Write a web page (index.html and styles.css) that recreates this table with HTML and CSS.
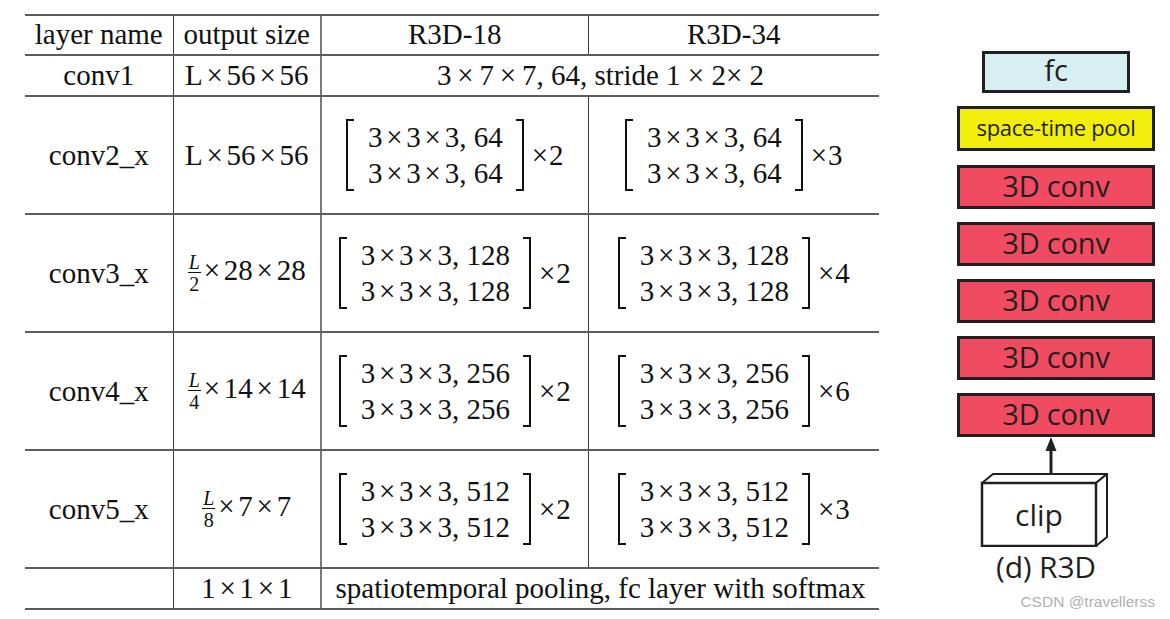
FILE: index.html
```html
<!DOCTYPE html>
<html lang="en">
  <head>
    <meta charset="UTF-8" />
    <title>R3D</title>
    <link rel="stylesheet" href="styles.css">
  </head>
  <body>
    <div class="page">
      <table class="arch">
        <tr class="head">
          <td class="c1">layer name</td>
          <td class="c2">output size</td>
          <td class="c3">R3D-18</td>
          <td class="c4">R3D-34</td>
        </tr>
        <tr class="thin">
          <td>conv1</td>
          <td>L<span class="x">×</span>56<span class="x">×</span>56</td>
          <td class="c3 wide" colspan="2">3<span class="x">×</span>7<span class="x">×</span>7, 64, stride 1 × 2× 2</td>
        </tr>
        <tr class="tall">
          <td>conv2_x</td>
          <td>L<span class="x">×</span>56<span class="x">×</span>56</td>
          <td class="c3">
            <div class="mat"><span class="lb"></span><span class="rows"><span>3<span class="x">×</span>3<span class="x">×</span>3, 64</span><span>3<span class="x">×</span>3<span class="x">×</span>3, 64</span></span><span class="rb"></span><span class="rep"><span class="x">×</span>2</span></div>
          </td>
          <td>
            <div class="mat"><span class="lb"></span><span class="rows"><span>3<span class="x">×</span>3<span class="x">×</span>3, 64</span><span>3<span class="x">×</span>3<span class="x">×</span>3, 64</span></span><span class="rb"></span><span class="rep"><span class="x">×</span>3</span></div>
          </td>
        </tr>
        <tr class="tall">
          <td>conv3_x</td>
          <td><span class="frac"><i>L</i><span>2</span></span><span class="x">×</span>28<span class="x">×</span>28</td>
          <td class="c3">
            <div class="mat"><span class="lb"></span><span class="rows"><span>3<span class="x">×</span>3<span class="x">×</span>3, 128</span><span>3<span class="x">×</span>3<span class="x">×</span>3, 128</span></span><span class="rb"></span><span class="rep"><span class="x">×</span>2</span></div>
          </td>
          <td>
            <div class="mat"><span class="lb"></span><span class="rows"><span>3<span class="x">×</span>3<span class="x">×</span>3, 128</span><span>3<span class="x">×</span>3<span class="x">×</span>3, 128</span></span><span class="rb"></span><span class="rep"><span class="x">×</span>4</span></div>
          </td>
        </tr>
        <tr class="tall">
          <td>conv4_x</td>
          <td><span class="frac"><i>L</i><span>4</span></span><span class="x">×</span>14<span class="x">×</span>14</td>
          <td class="c3">
            <div class="mat"><span class="lb"></span><span class="rows"><span>3<span class="x">×</span>3<span class="x">×</span>3, 256</span><span>3<span class="x">×</span>3<span class="x">×</span>3, 256</span></span><span class="rb"></span><span class="rep"><span class="x">×</span>2</span></div>
          </td>
          <td>
            <div class="mat"><span class="lb"></span><span class="rows"><span>3<span class="x">×</span>3<span class="x">×</span>3, 256</span><span>3<span class="x">×</span>3<span class="x">×</span>3, 256</span></span><span class="rb"></span><span class="rep"><span class="x">×</span>6</span></div>
          </td>
        </tr>
        <tr class="tall">
          <td>conv5_x</td>
          <td><span class="frac"><i>L</i><span>8</span></span><span class="x">×</span>7<span class="x">×</span>7</td>
          <td class="c3">
            <div class="mat"><span class="lb"></span><span class="rows"><span>3<span class="x">×</span>3<span class="x">×</span>3, 512</span><span>3<span class="x">×</span>3<span class="x">×</span>3, 512</span></span><span class="rb"></span><span class="rep"><span class="x">×</span>2</span></div>
          </td>
          <td>
            <div class="mat"><span class="lb"></span><span class="rows"><span>3<span class="x">×</span>3<span class="x">×</span>3, 512</span><span>3<span class="x">×</span>3<span class="x">×</span>3, 512</span></span><span class="rb"></span><span class="rep"><span class="x">×</span>3</span></div>
          </td>
        </tr>
        <tr class="thin">
          <td></td>
          <td>1<span class="x">×</span>1<span class="x">×</span>1</td>
          <td class="c3" colspan="2">spatiotemporal pooling, fc layer with softmax</td>
        </tr>
      </table>

      <div class="diagram">
        <div class="box fc">fc</div>
        <div class="box pool">space-time pool</div>
        <div class="box conv">3D conv</div>
        <div class="box conv">3D conv</div>
        <div class="box conv">3D conv</div>
        <div class="box conv">3D conv</div>
        <div class="box conv last">3D conv</div>
        <svg class="arrow" width="20" height="42" viewBox="0 0 20 42">
          <path d="M10 42 V12" stroke="#231f20" stroke-width="3" fill="none" />
          <path d="M10 0 L4.5 14 L15.5 14 Z" fill="#231f20" />
        </svg>
        <svg class="clip" width="130" height="74" viewBox="0 0 130 74">
          <path d="M2 10 L13 1 H127 L116 10 Z" fill="#fff" stroke="#231f20" stroke-width="2" stroke-linejoin="round" />
          <path d="M116 10 L127 1 V64 L116 73 Z" fill="#fff" stroke="#231f20" stroke-width="2" stroke-linejoin="round" />
          <rect x="2" y="10" width="114" height="63" fill="#fff" stroke="#231f20" stroke-width="2.5" />
          <text x="59" y="53" text-anchor="middle" class="clip-label">clip</text>
        </svg>
        <div class="caption">(d) R3D</div>
      </div>
    </div>
    <div class="mark">CSDN @travellerss</div>
  </body>
</html>
```

FILE: styles.css
```css
* {
  margin: 0;
  padding: 0;
  box-sizing: border-box;
}
body {
  background: #fff;
  width: 1170px;
  height: 619px;
  overflow: hidden;
  position: relative;
}
.page {
  display: flex;
  align-items: flex-start;
  padding: 14px 0 0 25px;
}

/* table */
.arch {
  border-collapse: collapse;
  font-family: "Liberation Serif", "Times New Roman", serif;
  font-size: 29px;
  color: #111;
  width: 854px;
  table-layout: fixed;
}
.arch td {
  border-top: 2px solid #5c5c5c;
  border-bottom: 2px solid #5c5c5c;
  border-left: 1.5px solid #3a3a3a;
  text-align: center;
  vertical-align: middle;
  white-space: nowrap;
  padding: 0;
  line-height: 1;
}
.arch td:first-child {
  border-left: none;
}
.arch td.c3 {
  border-left: 2px solid #7a7a7a;
}
.c1 { width: 148px; }
.c2 { width: 148px; }
.c3 { width: 267px; }
.c4 { width: 291px; }
.head td { height: 40px; padding-bottom: 2px; }
.thin td { height: 41px; padding-bottom: 1px; }
.tall td { height: 118px; }
.x {
  margin: 0 0.13em;
}
.wide .x {
  margin: 0 0.2em;
}

.frac {
  display: inline-flex;
  flex-direction: column;
  align-items: center;
  font-size: 20px;
  vertical-align: middle;
  line-height: 1;
  margin-right: -1px;
}
.frac i {
  border-bottom: 1px solid #111;
  padding: 0 1px 0;
}
.frac span {
  padding-top: 1px;
}

/* bracketed blocks */
.mat {
  display: flex;
  align-items: center;
  justify-content: center;
}
.lb, .rb {
  width: 8px;
  height: 72px;
  border-top: 2px solid #111;
  border-bottom: 2px solid #111;
}
.lb {
  border-left: 2px solid #111;
  margin-right: 14px;
}
.rb {
  border-right: 2px solid #111;
  margin-left: 13px;
}
.rows {
  display: flex;
  flex-direction: column;
  gap: 7px;
  line-height: 29px;
}
.rep {
  margin-left: 8px;
}
.rep .x {
  margin: 0 1px 0 0;
}

/* diagram */
.diagram {
  display: flex;
  flex-direction: column;
  align-items: center;
  width: 198px;
  margin: 37px 0 0 78px;
  font-family: "Open Sans", "Noto Sans", sans-serif;
  color: #231f20;
}
.box {
  border: 3px solid #231f20;
  text-align: center;
  width: 198px;
  height: 44px;
  line-height: 36px;
  font-size: 29px;
  margin-bottom: 13px;
}
.fc {
  width: 148px;
  height: 42px;
  background: #d7eff3;
  font-size: 29px;
  line-height: 32px;
}
.pool {
  height: 45px;
  background: #f2ee0c;
  font-size: 22px;
  line-height: 36px;
  letter-spacing: -0.3px;
  margin-bottom: 14px;
}
.conv {
  background: #f14b62;
  letter-spacing: -0.2px;
}
.conv.last {
  margin-bottom: 0;
}
.arrow {
  display: block;
  margin: 0 0 0 -10px;
}
.clip {
  display: block;
  margin: -6px 0 0 -22px;
}
.clip-label {
  font-family: "Open Sans", "Noto Sans", sans-serif;
  font-size: 30px;
  fill: #231f20;
}
.caption {
  font-size: 30px;
  line-height: 32px;
  margin: 4px 0 0 -20px;
  letter-spacing: -0.2px;
}
.mark {
  position: absolute;
  right: 15px;
  bottom: 8px;
  font-family: "Liberation Sans", Arial, sans-serif;
  font-size: 15.5px;
  color: #b0b0b0;
}
```
